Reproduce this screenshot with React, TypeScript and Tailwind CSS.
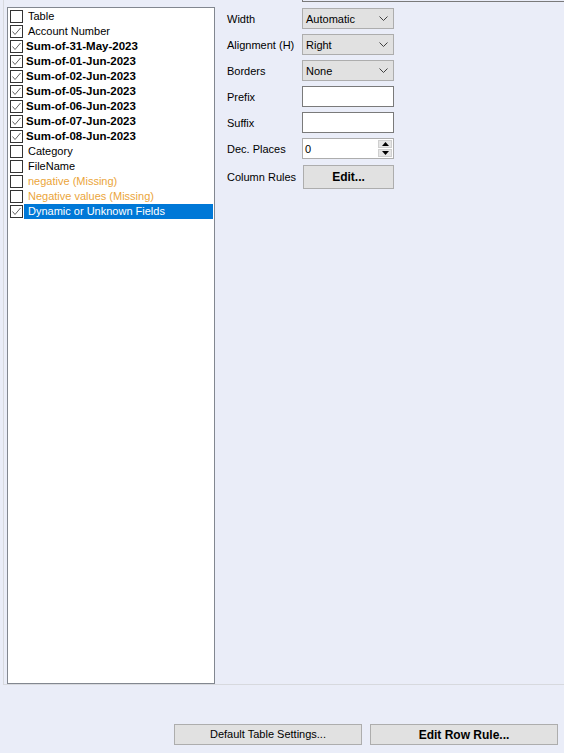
import React from "react";

type Field = {
  label: string;
  checked: boolean;
  bold?: boolean;
  missing?: boolean;
  selected?: boolean;
};

const fields: Field[] = [
  { label: "Table", checked: false },
  { label: "Account Number", checked: true },
  { label: "Sum-of-31-May-2023", checked: true, bold: true },
  { label: "Sum-of-01-Jun-2023", checked: true, bold: true },
  { label: "Sum-of-02-Jun-2023", checked: true, bold: true },
  { label: "Sum-of-05-Jun-2023", checked: true, bold: true },
  { label: "Sum-of-06-Jun-2023", checked: true, bold: true },
  { label: "Sum-of-07-Jun-2023", checked: true, bold: true },
  { label: "Sum-of-08-Jun-2023", checked: true, bold: true },
  { label: "Category", checked: false },
  { label: "FileName", checked: false },
  { label: "negative (Missing)", checked: false, missing: true },
  { label: "Negative values (Missing)", checked: false, missing: true },
  { label: "Dynamic or Unknown Fields", checked: true, selected: true },
];

function CheckBox({ checked }: { checked: boolean }) {
  return (
    <div className="w-[13px] h-[13px] shrink-0 border border-[#333333] bg-white flex items-center justify-center">
      {checked && (
        <svg width="11" height="11" viewBox="0 0 11 11">
          <polyline
            points="1.5,5.5 4,8.5 9.5,2"
            fill="none"
            stroke="#606060"
            strokeWidth="1"
          />
        </svg>
      )}
    </div>
  );
}

function Chevron() {
  return (
    <svg width="9" height="6" viewBox="0 0 9 6" className="shrink-0">
      <polyline points="0.5,0.5 4.5,4.5 8.5,0.5" fill="none" stroke="#404040" strokeWidth="1" />
    </svg>
  );
}

function Select({ value }: { value: string }) {
  return (
    <div className="w-[92px] h-[21px] bg-[#e1e1e1] border border-[#adadad] flex items-center justify-between pl-[3px] pr-[5px]">
      <span className="mt-[1px]">{value}</span>
      <Chevron />
    </div>
  );
}

function TextBox() {
  return <div className="w-[92px] h-[21px] bg-white border border-[#7a7a7a]" />;
}

function Spinner() {
  return (
    <div className="w-[92px] h-[21px] bg-white border border-[#adadad] flex items-center justify-between pl-[2px] pr-[1px]">
      <span className="mt-[1px]">0</span>
      <div className="w-[14px] h-[17px] flex flex-col gap-[1px]">
        <div className="flex-1 bg-[#e5e5e5] border border-[#cfcfcf] flex items-center justify-center">
          <svg width="7" height="4" viewBox="0 0 7 4">
            <polygon points="0,4 3.5,0 7,4" fill="#000" />
          </svg>
        </div>
        <div className="flex-1 bg-[#e5e5e5] border border-[#cfcfcf] flex items-center justify-center">
          <svg width="7" height="4" viewBox="0 0 7 4">
            <polygon points="0,0 3.5,4 7,0" fill="#000" />
          </svg>
        </div>
      </div>
    </div>
  );
}

export default function App() {
  return (
    <div className="w-[564px] h-[753px] overflow-hidden bg-[#eaedf8] text-[11px] leading-none text-black font-['Liberation_Sans',Arial,sans-serif]">
      <div className="ml-[3px] h-[685px] border-l border-b border-[#d7d9de] flex items-start pl-[3px]">
        <div className="mt-[7px] w-[208px] h-[677px] bg-white border border-[#828790] pt-[1px] pl-[2px] pr-[1px]">
          {fields.map((f) => (
            <div key={f.label} className="h-[15px] flex items-center">
              <CheckBox checked={f.checked} />
              <div
                className={`ml-[1px] flex-1 h-[15px] flex items-center whitespace-nowrap ${
                  f.bold ? "font-bold text-[11.5px] pl-[2px]" : "pl-[4px]"
                } ${f.selected ? "bg-[#0078d7] text-white" : ""} ${
                  f.missing ? "text-[#eba53a]" : ""
                }`}
              >
                {f.label}
              </div>
            </div>
          ))}
        </div>

        <div className="flex-1 flex flex-col">
          <div className="ml-[87px] h-[2px] border-l border-b border-[#7a7a7a]" />
          <div className="mt-[6px] pl-[12px] grid grid-cols-[75px_92px] gap-y-[5px] items-center">
            <span className="mt-[1px]">Width</span>
            <Select value="Automatic" />
            <span className="mt-[1px]">Alignment (H)</span>
            <Select value="Right" />
            <span className="mt-[1px]">Borders</span>
            <Select value="None" />
            <span className="mt-[1px]">Prefix</span>
            <TextBox />
            <span className="mt-[1px]">Suffix</span>
            <TextBox />
            <span className="mt-[1px]">Dec. Places</span>
            <Spinner />
            <span className="mt-[2px]">Column Rules</span>
            <div className="mt-[1px] ml-[1px] w-[91px] h-[24px] bg-[#e1e1e1] border border-[#adadad] flex items-center justify-center font-bold text-[12px]">
              Edit...
            </div>
          </div>
        </div>
      </div>

      <div className="mt-[39px] flex justify-end gap-[8px] pr-[6px]">
        <div className="w-[188px] h-[21px] bg-[#e1e1e1] border border-[#adadad] flex items-center justify-center">
          Default Table Settings...
        </div>
        <div className="w-[188px] h-[21px] bg-[#e1e1e1] border border-[#adadad] flex items-center justify-center font-bold text-[12px]">
          Edit Row Rule...
        </div>
      </div>
    </div>
  );
}
